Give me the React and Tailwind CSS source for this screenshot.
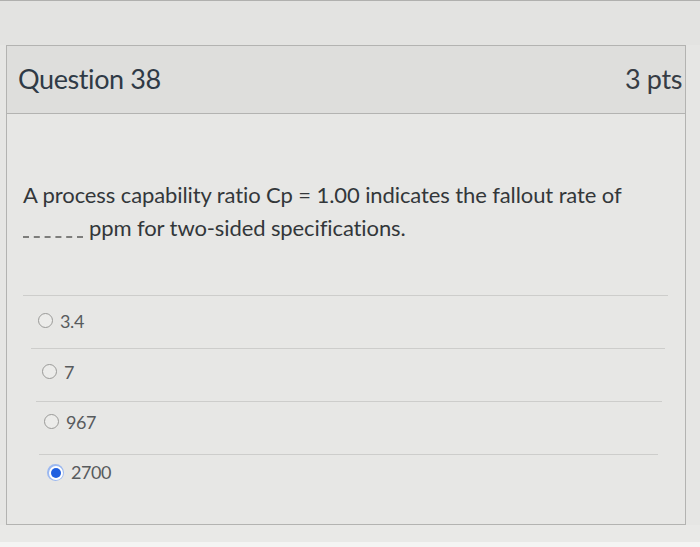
const answers = [
  { label: "3.4", shift: "ml-[31px] pt-[17px]", line: "ml-[16px] mr-[17px]" },
  { label: "7", shift: "ml-[35px] pt-[15px]", line: "ml-[24px] mr-[20px]" },
  { label: "967", shift: "ml-[37px] pt-[12px]", line: "ml-[29px] mr-[23px]" },
  { label: "2700", shift: "ml-[40px] pt-[9px]", line: "ml-[32px] mr-[27px]", checked: true },
];

const Radio = ({ checked }) =>
  checked ? (
    <span className="w-[17px] h-[17px] rounded-full bg-[#9bb8f0] flex items-center justify-center">
      <span className="w-[14px] h-[14px] rounded-full bg-white flex items-center justify-center">
        <span className="w-[10px] h-[10px] rounded-full bg-[#1f5fe0]"></span>
      </span>
    </span>
  ) : (
    <span className="w-[15px] h-[15px] rounded-full border-[1.5px] border-[#9a9a98] bg-[#ececea]"></span>
  );

export default function App() {
  return (
    <div className="w-[700px] h-[547px] bg-[#e6e6e4] overflow-hidden font-['Lato','Open_Sans',sans-serif] flex flex-col">
      <div className="h-[45px] flex-shrink-0 bg-[#e3e3e1] border-t border-[#b0b0ae]"></div>

      <div className="ml-[6px] mr-[14px] border border-[#b3b3b1] bg-[#e7e7e5] flex-shrink-0">
        <div className="h-[68px] px-[11px] flex items-center justify-between bg-[#dededc] border-b border-[#b3b3b1]">
          <h2 className="text-[27px] leading-none text-[#2f3a46] tracking-[-0.4px] pb-[2px]">
            Question 38
          </h2>
          <span className="text-[27px] leading-none text-[#363c44] tracking-[-0.4px] mr-[-8px] pb-[2px]">
            3 pts
          </span>
        </div>

        <div className="pt-[64px] pb-[17px]">
          <p className="pl-[16px] pr-[20px] text-[22px] leading-[33px] text-[#33373a] tracking-[-0.1px]">
            A process capability ratio Cp = 1.00 indicates the fallout rate of
            <br />
            <span className="inline-block w-[60px] border-b-2 border-dashed border-[#7d7d7b] mr-[6px] align-baseline mb-[-2px]"></span>
            ppm for two-sided specifications.
          </p>

          <div className="mt-[51px]">
            {answers.map((a) => (
              <div key={a.label}>
                <div className={`border-t border-[#cdcdcb] ${a.line}`}></div>
                <div className={`h-[52px] flex items-start gap-[7px] ${a.shift}`}>
                  <Radio checked={a.checked} />
                  <span className="text-[18px] leading-[17px] text-[#585b5d] tracking-[-0.4px]">
                    {a.label}
                  </span>
                </div>
              </div>
            ))}
          </div>
        </div>
      </div>

      <div className="flex-1 bg-[#e9e9e7]"></div>
      <div className="h-[5px] bg-[#f4f4f3]"></div>
    </div>
  );
}
